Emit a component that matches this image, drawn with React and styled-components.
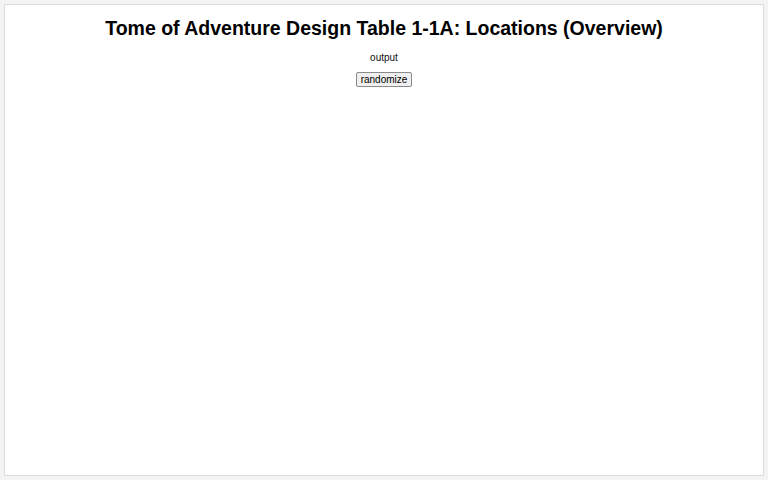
import React from 'react';
import styled, { createGlobalStyle } from 'styled-components';

const GlobalStyle = createGlobalStyle`
  html, body {
    margin: 0;
    padding: 0;
    background: #f3f3f3;
    font-family: "Liberation Sans", Arial, sans-serif;
  }
  body {
    padding: 4px;
  }
`;

const Panel = styled.div`
  box-sizing: border-box;
  height: 472px;
  background: #ffffff;
  border: 1px solid #dcdcdc;
  display: flex;
  flex-direction: column;
  align-items: center;
`;

const Title = styled.h1`
  margin: 12px 0 0;
  font-size: 19.5px;
  font-weight: bold;
  color: #000;
  line-height: 23px;
`;

const Output = styled.div`
  margin-top: 12px;
  font-size: 10px;
  line-height: 12px;
  color: #111;
`;

const Button = styled.button`
  box-sizing: border-box;
  margin-top: 8px;
  font-family: "Liberation Sans", Arial, sans-serif;
  font-size: 10px;
  line-height: 12px;
  padding: 0 4px;
  height: 15px;
  color: #000;
  background: #efefef;
  border: 1px solid #8a8a8a;
  border-radius: 2px;
`;

export default function App() {
  return (
    <>
      <GlobalStyle />
      <Panel>
        <Title>Tome of Adventure Design Table 1-1A: Locations (Overview)</Title>
        <Output>output</Output>
        <Button type="button">randomize</Button>
      </Panel>
    </>
  );
}
